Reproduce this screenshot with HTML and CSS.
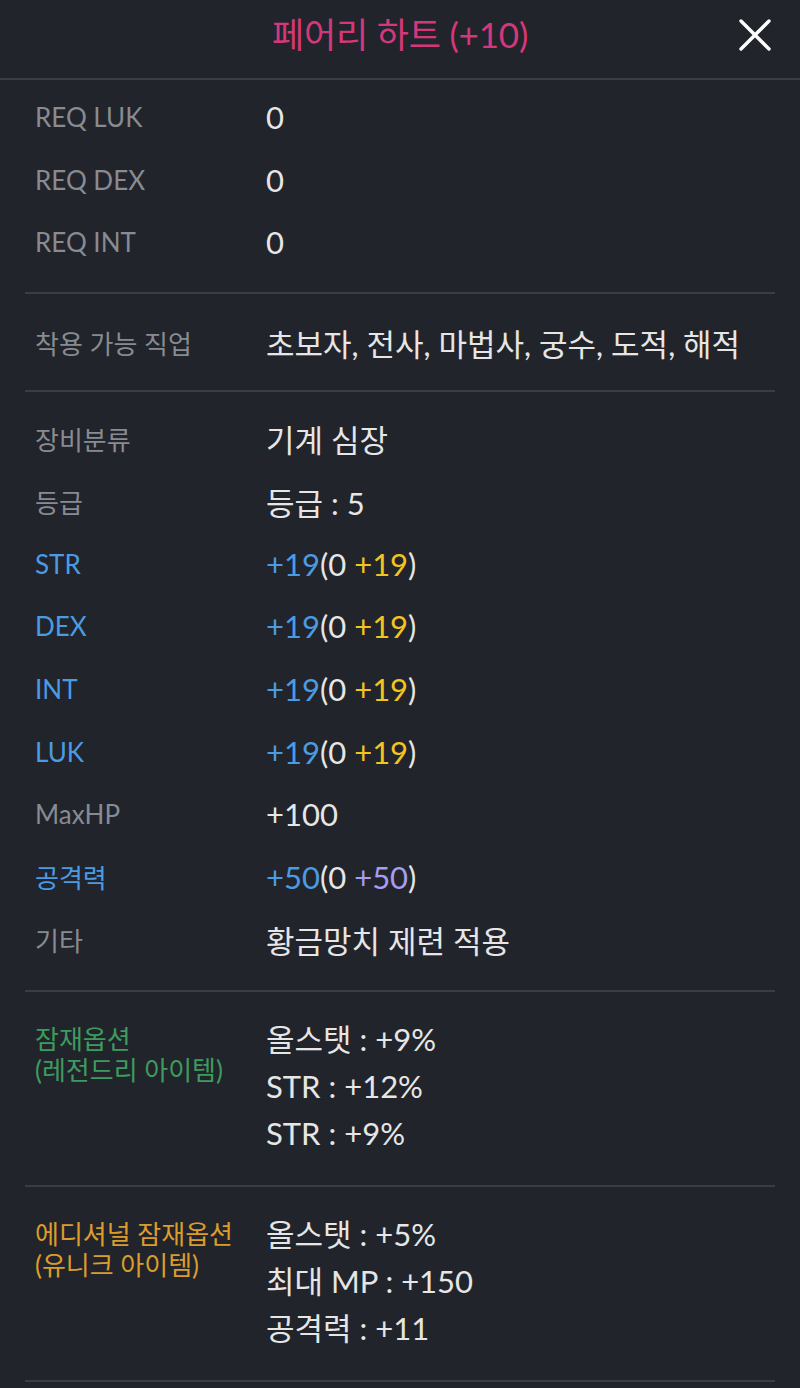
FILE: index.html
```html
<!DOCTYPE html>
<html lang="ko">
<head>
<meta charset="utf-8">
<title>페어리 하트 (+10)</title>
<link rel="stylesheet" href="styles.css">
</head>
<body>
<div class="page">
  <header class="header">
    <div class="header-side"></div>
    <h1 class="title">페어리 하트 (+10)</h1>
    <div class="header-side header-right">
      <svg class="close" width="34" height="34" viewBox="0 0 34 34" aria-label="닫기">
        <path d="M3 3 L31 31 M31 3 L3 31" stroke="#ffffff" stroke-width="3.4" stroke-linecap="round" fill="none"/>
      </svg>
    </div>
  </header>

  <section class="section sec-req">
    <div class="row"><div class="label">REQ LUK</div><div class="value">0</div></div>
    <div class="row"><div class="label">REQ DEX</div><div class="value">0</div></div>
    <div class="row"><div class="label">REQ INT</div><div class="value">0</div></div>
  </section>

  <section class="section sec-job">
    <div class="row"><div class="label">착용 가능 직업</div><div class="value">초보자, 전사, 마법사, 궁수, 도적, 해적</div></div>
  </section>

  <section class="section sec-stats">
    <div class="row"><div class="label">장비분류</div><div class="value">기계 심장</div></div>
    <div class="row"><div class="label">등급</div><div class="value">등급 : 5</div></div>
    <div class="row"><div class="label blue">STR</div><div class="value"><span class="blue">+19</span>(0 <span class="yellow">+19</span>)</div></div>
    <div class="row"><div class="label blue">DEX</div><div class="value"><span class="blue">+19</span>(0 <span class="yellow">+19</span>)</div></div>
    <div class="row"><div class="label blue">INT</div><div class="value"><span class="blue">+19</span>(0 <span class="yellow">+19</span>)</div></div>
    <div class="row"><div class="label blue">LUK</div><div class="value"><span class="blue">+19</span>(0 <span class="yellow">+19</span>)</div></div>
    <div class="row"><div class="label">MaxHP</div><div class="value">+100</div></div>
    <div class="row"><div class="label blue">공격력</div><div class="value"><span class="blue">+50</span>(0 <span class="purple">+50</span>)</div></div>
    <div class="row"><div class="label">기타</div><div class="value">황금망치 제련 적용</div></div>
  </section>

  <section class="section sec-pot">
    <div class="pot">
      <div class="pot-label green">잠재옵션<br>(레전드리 아이템)</div>
      <div class="pot-values">
        <div class="pot-line">올스탯 : +9%</div>
        <div class="pot-line">STR : +12%</div>
        <div class="pot-line">STR : +9%</div>
      </div>
    </div>
  </section>

  <section class="section sec-pot">
    <div class="pot">
      <div class="pot-label orange">에디셔널 잠재옵션<br>(유니크 아이템)</div>
      <div class="pot-values">
        <div class="pot-line">올스탯 : +5%</div>
        <div class="pot-line">최대 MP : +150</div>
        <div class="pot-line">공격력 : +11</div>
      </div>
    </div>
  </section>
</div>
</body>
</html>
```

FILE: styles.css
```css
html, body {
  margin: 0;
  padding: 0;
  background: #21242b;
}

body {
  font-family: Lato, "Noto Sans CJK KR", sans-serif;
  color: #e6e6e6;
  width: 800px;
  min-height: 1388px;
}

.page {
  display: flex;
  flex-direction: column;
}

.header {
  display: grid;
  grid-template-columns: 1fr auto 1fr;
  align-items: center;
  height: 70px;
  padding-bottom: 8px;
  border-bottom: 2px solid #3a3d44;
}

.title {
  margin: 0 0 5px;
  font-size: 35px;
  font-weight: 400;
  color: #d5387a;
  letter-spacing: -0.2px;
}

.header-right {
  display: flex;
  justify-content: flex-end;
  padding-right: 28px;
}

.close {
  display: block;
}

.section {
  margin: 0 25px;
  border-bottom: 2px solid #3a3d44;
}

.sec-req {
  padding: 6px 0 18px;
}

.sec-job {
  padding: 17px 0;
}

.sec-stats {
  padding: 15px 0 19px;
}

.sec-pot {
  padding: 24px 0 28px;
}

.row {
  display: grid;
  grid-template-columns: 231px 1fr;
  align-items: center;
  height: 62.6px;
  padding-left: 10px;
}

.label {
  font-size: 26px;
  color: #888b91;
}

.value {
  font-size: 31px;
  color: #e6e6e6;
  white-space: nowrap;
}

.blue { color: #4b9be3; }
.yellow { color: #f2c41f; }
.purple { color: #a79cf0; }
.green { color: #3e9b5e; }
.orange { color: #dc9c2c; }

.pot {
  display: grid;
  grid-template-columns: 231px 1fr;
  align-items: start;
  padding-left: 10px;
}

.pot-label {
  font-size: 26px;
  line-height: 31px;
  padding-top: 8px;
}

.pot-line {
  font-size: 31px;
  line-height: 47px;
  color: #e6e6e6;
}
```
